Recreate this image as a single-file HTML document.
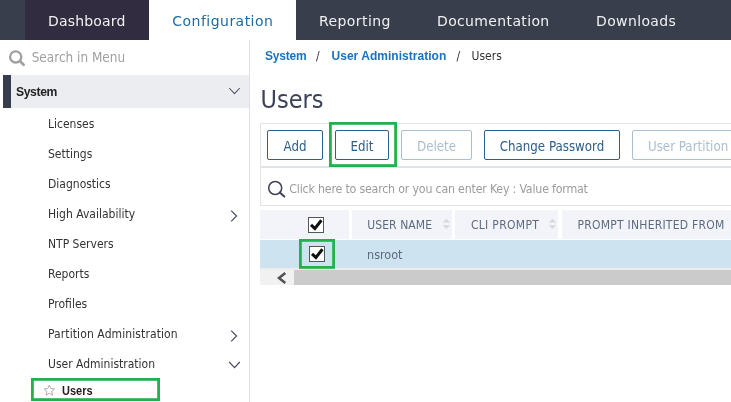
<!DOCTYPE html>
<html><head><meta charset="utf-8"><title>Users</title>
<style>
html,body{margin:0;padding:0;}
body{width:731px;height:402px;position:relative;overflow:hidden;background:#fff;font-family:"DejaVu Sans Condensed","Liberation Sans",sans-serif;font-size:12px;color:#333;}
.a{position:absolute;white-space:nowrap;}
#nav{left:0;top:0;width:731px;height:40px;background:#393e4d;}
#dash{left:25px;top:0;width:124px;height:40px;background:#322c40;}
#conf{left:149px;top:0;width:147px;height:40px;background:#fff;}
.tab{font-family:"DejaVu Sans","Liberation Sans",sans-serif;font-size:14px;letter-spacing:0.27px;color:#f0f0f0;top:12px;line-height:18px;}
.bd{font-family:"Liberation Sans",sans-serif;font-weight:bold;}
.mi{left:48px;font-size:12px;color:#333;line-height:16px;}
.btn{top:130px;height:28px;border:1px solid #2c5f8a;border-radius:2px;box-sizing:content-box;color:#2c5f8a;font-size:13.2px;line-height:31px;text-align:center;background:#fff;}
.btn.dis{border-color:#a9bfd2;color:#a9bfd2;}
svg.gb{z-index:5;}
.th{top:209.7px;height:29.8px;background:#f2f4f9;color:#5e6a80;font-size:12px;line-height:30px;}
#root{position:absolute;left:0;top:0;width:731px;height:402px;overflow:hidden;will-change:transform;background:#fff;}
</style></head><body>
<div id="root">
<div class="a" id="nav"></div>
<div class="a" id="dash"></div>
<div class="a" id="conf"></div>
<div class="a tab" id="t1" style="left:48px;letter-spacing:0.17px;">Dashboard</div>
<div class="a tab" id="t2" style="left:172.3px;color:#1e6aa3;letter-spacing:0.47px;">Configuration</div>
<div class="a tab" id="t3" style="left:319px;letter-spacing:0.42px;">Reporting</div>
<div class="a tab" id="t4" style="left:437px;letter-spacing:0.36px;">Documentation</div>
<div class="a tab" id="t5" style="left:596px;letter-spacing:0.37px;">Downloads</div>

<!-- sidebar -->
<div class="a" style="left:249px;top:40px;width:1px;height:362px;background:#dde1e6;"></div>
<svg class="a" style="left:8px;top:49px;" width="18" height="18" viewBox="0 0 18 18"><circle cx="7.7" cy="7.9" r="5.6" fill="none" stroke="#a0a0a0" stroke-width="2.3"/><path d="M12 12.2 L15.6 15.7" stroke="#a2a2a2" stroke-width="2.8" stroke-linecap="round"/></svg>
<div class="a" id="sm" style="left:31.7px;top:49px;font-size:13.45px;line-height:18px;color:#a0a0a0;">Search in Menu</div>
<div class="a" style="left:3.2px;top:75.3px;width:245.8px;height:32.7px;background:#ecedf0;"></div>
<div class="a" style="left:3.2px;top:75.3px;width:7.6px;height:32.7px;background:#383d4d;"></div>
<div class="a bd" id="sys" style="left:16px;top:83.8px;font-size:12.2px;letter-spacing:-0.4px;font-weight:bold;line-height:16px;color:#222;">System</div>
<svg class="a" style="left:227px;top:86px;" width="14" height="10" viewBox="0 0 14 10"><path d="M2.2 2 L7.5 7.7 L12.8 2" fill="none" stroke="#4f5667" stroke-width="1.1"/></svg>

<div class="a mi" id="m1" style="top:116px;">Licenses</div>
<div class="a mi" id="m2" style="top:146px;">Settings</div>
<div class="a mi" id="m3" style="top:176px;">Diagnostics</div>
<div class="a mi" id="m4" style="top:206px;">High Availability</div>
<div class="a mi" id="m5" style="top:236px;">NTP Servers</div>
<div class="a mi" id="m6" style="top:266px;">Reports</div>
<div class="a mi" id="m7" style="top:296px;">Profiles</div>
<div class="a mi" id="m8" style="top:326px;letter-spacing:0.1px;">Partition Administration</div>
<div class="a mi" id="m9" style="top:356px;">User Administration</div>
<svg class="a" style="left:229px;top:208.7px;" width="10" height="14" viewBox="0 0 10 14"><path d="M2.2 1.6 L7.6 7 L2.2 12.4" fill="none" stroke="#474e60" stroke-width="1.2"/></svg>
<svg class="a" style="left:229px;top:328.7px;" width="10" height="14" viewBox="0 0 10 14"><path d="M2.2 1.6 L7.6 7 L2.2 12.4" fill="none" stroke="#474e60" stroke-width="1.2"/></svg>
<svg class="a" style="left:227px;top:360.3px;" width="14" height="10" viewBox="0 0 14 10"><path d="M2.2 2 L7.5 7.7 L12.8 2" fill="none" stroke="#474e60" stroke-width="1.2"/></svg>

<svg class="a" style="left:31px;top:378px;" width="129" height="23"><rect x="1.4" y="1.4" width="126.2" height="20.2" fill="none" stroke="#22b14c" stroke-width="2.8"/></svg>
<svg class="a" style="left:42.6px;top:384px;" width="12.6" height="12.6" viewBox="0 0 12 12"><path d="M6 1 L7.4 4.4 L11 4.7 L8.3 7.1 L9.1 10.7 L6 8.8 L2.9 10.7 L3.7 7.1 L1 4.7 L4.6 4.4 Z" fill="none" stroke="#aaa" stroke-width="0.9"/></svg>
<div class="a bd" id="usr" style="left:62px;top:382.6px;font-size:12px;transform:scaleX(0.915);transform-origin:0 0;font-weight:bold;line-height:16px;color:#222;">Users</div>

<!-- content -->
<div class="a bd" id="b1" style="left:265px;top:48px;font-size:12px;letter-spacing:-0.2px;font-weight:bold;line-height:16px;color:#1a73c2;">System</div>
<div class="a" style="left:316px;top:48px;font-size:12px;line-height:16px;color:#333;">/</div>
<div class="a bd" id="b2" style="left:331.5px;top:48px;font-size:12px;letter-spacing:0.03px;font-weight:bold;line-height:16px;color:#1a73c2;">User Administration</div>
<div class="a" style="left:456.5px;top:48px;font-size:12px;line-height:16px;color:#333;">/</div>
<div class="a" id="b3" style="left:471.6px;top:48px;font-size:12px;line-height:16px;color:#333;">Users</div>
<div class="a" id="ttl" style="left:260.5px;top:83px;font-size:25px;line-height:34px;color:#3c4257;">Users</div>

<div class="a" style="left:260px;top:122.8px;width:480px;height:83px;border:1px solid #e0e3e7;box-sizing:border-box;"></div>
<div class="a" style="left:260px;top:166.2px;width:480px;height:1.5px;background:#e0e3e7;"></div>

<div class="a btn" id="bt1" style="left:267px;width:54px;">Add</div>
<div class="a btn" id="bt2" style="left:335px;width:52px;">Edit</div>
<div class="a btn dis" id="bt3" style="left:401px;width:69px;">Delete</div>
<div class="a btn" id="bt4" style="left:484px;width:134px;">Change Password</div>
<div class="a btn dis" id="bt5" style="left:631.5px;width:120px;text-align:left;text-indent:15.5px;">User Partition</div>
<svg class="a" style="left:329px;top:122px;" width="68" height="45"><rect x="1.4" y="1.4" width="65.2" height="42.2" fill="none" stroke="#22b14c" stroke-width="2.8"/></svg>

<svg class="a" style="left:267px;top:180px;" width="20" height="20" viewBox="0 0 20 20"><circle cx="8.2" cy="8" r="6.5" fill="none" stroke="#3c4257" stroke-width="1.5"/><path d="M12.8 12.5 L17.3 16.5" stroke="#3c4257" stroke-width="2" stroke-linecap="round"/></svg>
<div class="a" id="ph" style="left:289.3px;top:181px;font-size:12.3px;letter-spacing:-0.2px;line-height:16px;color:#9c9c9c;">Click here to search or you can enter Key : Value format</div>

<div class="a th" style="left:260px;width:88.7px;"></div>
<div class="a th" id="h1" style="left:351.7px;width:100px;"><span style="margin-left:15.5px;letter-spacing:0.1px;">USER NAME</span></div>
<div class="a th" id="h2" style="left:454.9px;width:103.6px;"><span style="margin-left:16px;letter-spacing:0.33px;">CLI PROMPT</span></div>
<div class="a th" id="h3" style="left:562px;width:180px;"><span style="margin-left:15.5px;letter-spacing:0.24px;">PROMPT INHERITED FROM</span></div>
<svg class="a" style="left:441.5px;top:218px;" width="9" height="12" viewBox="0 0 9 12"><path d="M0.6 4.6 L4.4 0.8 L8.2 4.6 Z M0.6 7.3 L4.4 11.1 L8.2 7.3 Z" fill="#d6d8dc"/></svg>
<svg class="a" style="left:548px;top:218px;" width="9" height="12" viewBox="0 0 9 12"><path d="M0.6 4.6 L4.4 0.8 L8.2 4.6 Z M0.6 7.3 L4.4 11.1 L8.2 7.3 Z" fill="#d6d8dc"/></svg>
<div class="a" style="left:260px;top:239.5px;width:480px;height:28.4px;background:#cde3f0;"></div>
<div class="a" id="ns" style="left:367px;top:246.5px;font-size:12.5px;line-height:16px;color:#5e6a80;">nsroot</div>

<!-- checkboxes -->
<svg class="a" style="left:308px;top:217px;" width="16" height="16" viewBox="0 0 16 16"><rect x="0.5" y="0.5" width="15" height="15" fill="#fff" stroke="#555" stroke-width="1"/><path d="M3 7.8 L6.9 11.5 L13.4 3.3" fill="none" stroke="#111" stroke-width="3"/></svg>
<svg class="a" style="left:309px;top:246px;" width="16" height="16" viewBox="0 0 16 16"><rect x="0.5" y="0.5" width="15" height="15" fill="#fff" stroke="#555" stroke-width="1"/><path d="M3 7.8 L6.9 11.5 L13.4 3.3" fill="none" stroke="#111" stroke-width="3"/></svg>
<svg class="a gb" style="left:299px;top:238.8px;" width="36" height="29.8"><rect x="1.4" y="1.4" width="33.2" height="27" fill="none" stroke="#22b14c" stroke-width="2.8"/></svg>

<!-- scrollbar -->
<div class="a" style="left:260px;top:267.9px;width:480px;height:2.3px;background:#ececec;"></div>
<div class="a" style="left:260px;top:270.2px;width:34px;height:14.8px;background:#f1f1f1;"></div>
<div class="a" style="left:294px;top:270.2px;width:440px;height:14.8px;background:#cbcbcb;"></div>
<svg class="a" style="left:275px;top:270.6px;" width="14" height="14" viewBox="0 0 14 14"><path d="M10.3 2 L4 7 L10.3 12" fill="none" stroke="#505050" stroke-width="2.5"/></svg>
</div>
</body></html>
